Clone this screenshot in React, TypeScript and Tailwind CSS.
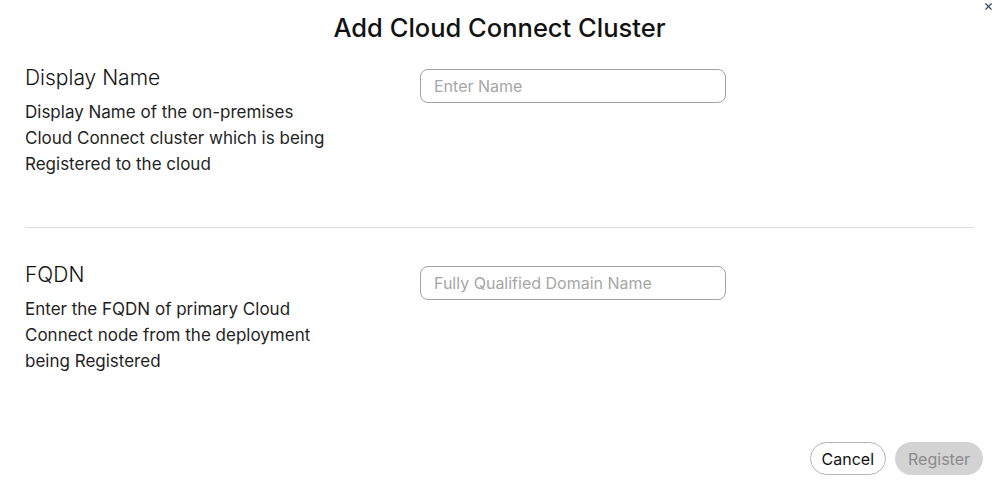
import { X } from 'lucide-react';

function Field({ label, desc, placeholder }: { label: string; desc: string[]; placeholder: string }) {
  return (
    <div className="flex items-start">
      <div className="w-[395px] shrink-0">
        <div className="text-[21px] leading-[20px] font-light text-[#111] -mt-[1px]">{label}</div>
        <div className="mt-[11px] text-[17px] leading-[26px] text-[#1f1f1f]">
          {desc.map((d) => (
            <div key={d}>{d}</div>
          ))}
        </div>
      </div>
      <input
        type="text"
        placeholder={placeholder}
        className="w-[306px] h-[34px] rounded-[8px] border border-[#a3a3a3] px-[13px] text-[16px] text-[#333] placeholder:text-[#a6a6a6] outline-none"
      />
    </div>
  );
}

export default function App() {
  return (
    <div
      className="relative w-[999px] h-[494px] bg-white flex flex-col"
      style={{ fontFamily: 'Inter, "Noto Sans", sans-serif' }}
    >
      <button className="absolute top-[1px] right-[5px] text-[#2b4a73]">
        <X size={11} strokeWidth={2.5} />
      </button>

      <h1 className="h-[56px] flex items-center justify-center text-[25.5px] font-medium text-[#121212]">
        Add Cloud Connect Cluster
      </h1>

      <div className="px-[25px] pt-[13px] h-[171px]">
        <Field
          label="Display Name"
          desc={['Display Name of the on-premises', 'Cloud Connect cluster which is being', 'Registered to the cloud']}
          placeholder="Enter Name"
        />
      </div>

      <div className="mx-[25px] h-px bg-[#dedede]" />

      <div className="px-[25px] pt-[38px] h-[214px]">
        <Field
          label="FQDN"
          desc={['Enter the FQDN of primary Cloud', 'Connect node from the deployment', 'being Registered']}
          placeholder="Fully Qualified Domain Name"
        />
      </div>

      <div className="flex justify-end gap-[9px] pr-[16px]">
        <button className="h-[33px] px-[11px] rounded-full border border-[#b5b5b5] text-[16px] text-[#111]">
          Cancel
        </button>
        <button disabled className="h-[33px] px-[13px] rounded-full bg-[#d3d3d3] text-[16px] text-[#8a8a8a]">
          Register
        </button>
      </div>
    </div>
  );
}
